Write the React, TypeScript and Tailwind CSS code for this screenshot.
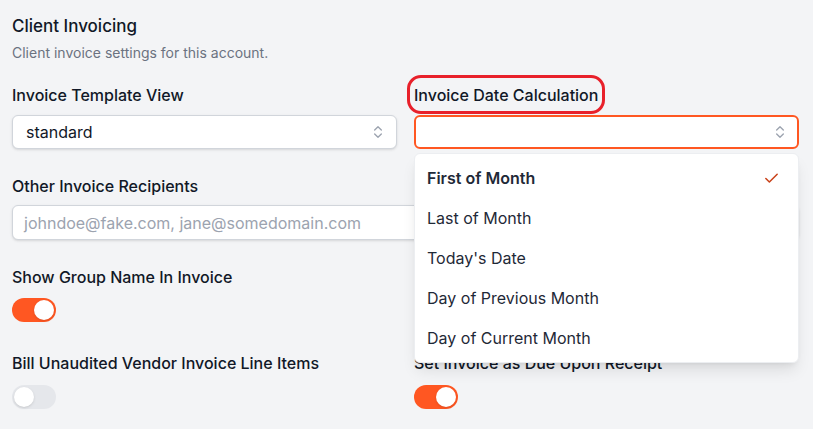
import React from "react";
import { ChevronsUpDown, Check } from "lucide-react";

function SelectBox({ value, active }: { value: string; active?: boolean }) {
  return (
    <div
      className={
        "flex h-[34px] items-center justify-between rounded-md bg-white text-[16px] text-[#111827] " +
        (active
          ? "border-2 border-[#ff5722] pl-[12px] pr-[9px]"
          : "border border-[#d1d5db] pl-[13px] pr-[10px] shadow-sm")
      }
    >
      <span>{value}</span>
      <ChevronsUpDown size={16} strokeWidth={2} className="text-[#9ca3af]" />
    </div>
  );
}

function Toggle({ on }: { on: boolean }) {
  return (
    <div
      className={
        "flex h-6 w-11 items-center rounded-full p-[2px] " +
        (on ? "justify-end bg-[#ff5722]" : "justify-start bg-[#e5e7eb]")
      }
    >
      <div className="h-5 w-5 rounded-full bg-white shadow" />
    </div>
  );
}

export default function App() {
  const options = [
    "First of Month",
    "Last of Month",
    "Today's Date",
    "Day of Previous Month",
    "Day of Current Month",
  ];
  return (
    <div
      className="h-[429px] w-[813px] overflow-hidden bg-[#f3f4f6] pl-3 pr-[14px] text-[#111827]"
      style={{ fontFamily: "Inter, 'Noto Sans', sans-serif" }}
    >
      <div className="pt-[14px] text-[17px] font-medium leading-6">Client Invoicing</div>
      <div className="mt-[5px] text-[14px] leading-5 text-[#6b7280]">
        Client invoice settings for this account.
      </div>

      <div className="mt-[21px] grid grid-cols-2 gap-x-[17px]">
        <div>
          <div className="text-[16px] font-medium leading-[22px]">Invoice Template View</div>
          <div className="mt-[9px]">
            <SelectBox value="standard" />
          </div>
        </div>
        <div className="relative z-10">
          <div className="relative text-[16px] font-medium leading-[22px]">
            Invoice Date Calculation
            <div className="absolute left-[-7px] top-[-9px] h-[39px] w-[198px] rounded-[14px] border-[3px] border-[#e8202a]" />
          </div>
          <div className="relative mt-[9px]">
            <SelectBox value="" active />
            <div className="absolute left-0 right-0 top-[38px] rounded-md border border-[#eceef1] bg-white py-1 shadow-lg">
              {options.map((o, i) => (
                <div
                  key={o}
                  className={
                    "flex h-10 items-center justify-between pl-[12px] pr-[18px] text-[16px] text-[#1f2937] " +
                    (i === 0 ? "font-semibold" : "")
                  }
                >
                  <span className="-mt-[1px]">{o}</span>
                  {i === 0 && <Check size={17} strokeWidth={2.2} className="text-[#c9431b]" />}
                </div>
              ))}
            </div>
          </div>
        </div>

        <div className="col-span-2 mt-[26px]">
          <div className="text-[16px] font-medium leading-[22px]">Other Invoice Recipients</div>
          <div className="mt-[8px] flex h-[35px] items-center rounded-md border border-[#d1d5db] bg-white pl-[11px] text-[16px] text-[#9ca3af] shadow-sm">
            johndoe@fake.com, jane@somedomain.com
          </div>
        </div>

        <div className="mt-[26px]">
          <div className="text-[16px] font-medium leading-[22px]">Show Group Name In Invoice</div>
          <div className="mt-[10px]">
            <Toggle on />
          </div>
        </div>
        <div className="mt-[26px]" />

        <div className="mt-[30px]">
          <div className="text-[16px] font-medium leading-[22px]">Bill Unaudited Vendor Invoice Line Items</div>
          <div className="mt-[11px]">
            <Toggle on={false} />
          </div>
        </div>
        <div className="mt-[30px]">
          <div className="text-[16px] font-medium leading-[22px]">Set Invoice as Due Upon Receipt</div>
          <div className="mt-[11px]">
            <Toggle on />
          </div>
        </div>
      </div>
    </div>
  );
}
